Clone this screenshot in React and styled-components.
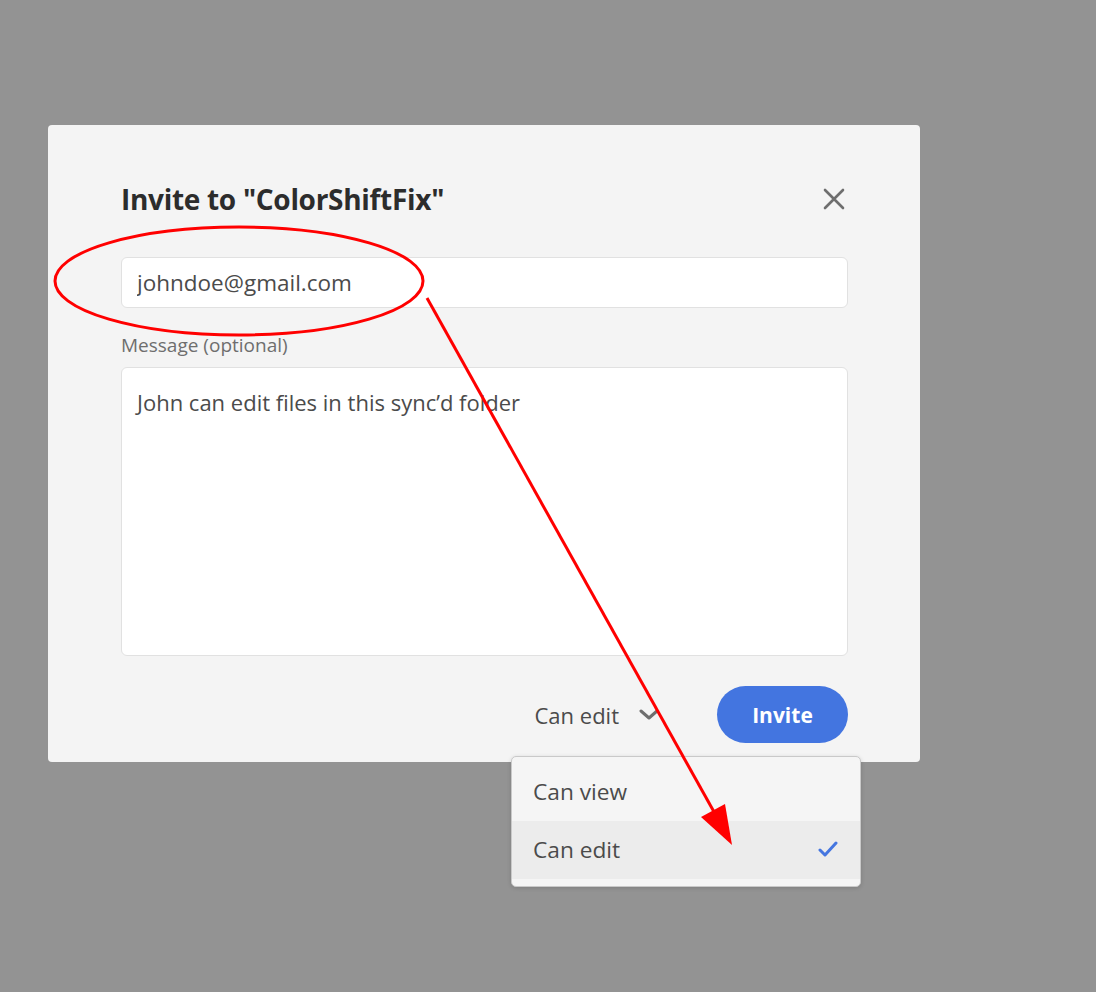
import React, { useState } from "react";
import styled, { createGlobalStyle } from "styled-components";

const GlobalStyle = createGlobalStyle`
  html, body {
    margin: 0;
    padding: 0;
    background: #939393;
  }
  body {
    font-family: "Open Sans", "Noto Sans", sans-serif;
    -webkit-font-smoothing: antialiased;
  }
`;

const InviteDialog = () => {
  const [email, setEmail] = useState("johndoe@gmail.com");
  const [message, setMessage] = useState("John can edit files in this sync\u2019d folder");
  const [role, setRole] = useState("edit");

  return (
    <Page>
      <GlobalStyle />
      <Dialog>
        <Header>
          <Title>Invite to "ColorShiftFix"</Title>
          <CloseButton aria-label="Close">
            <svg width="22" height="22" viewBox="0 0 22 22">
              <path d="M2 2 L20 20 M20 2 L2 20" stroke="#6e6e6e" strokeWidth="2.6" strokeLinecap="round" />
            </svg>
          </CloseButton>
        </Header>

        <EmailInput value={email} onChange={(e) => setEmail(e.target.value)} />

        <Label>Message (optional)</Label>
        <MessageBox value={message} onChange={(e) => setMessage(e.target.value)} />

        <Footer>
          <Picker>
            <PickerText>{role === "edit" ? "Can edit" : "Can view"}</PickerText>
            <svg width="20" height="12" viewBox="0 0 20 12">
              <path d="M2 2 L10 9 L18 2" fill="none" stroke="#6e6e6e" strokeWidth="3" strokeLinecap="round" strokeLinejoin="round" />
            </svg>
            <Menu>
              <MenuItem onClick={() => setRole("view")} $selected={role === "view"}>
                Can view
                {role === "view" && <Check />}
              </MenuItem>
              <MenuItem onClick={() => setRole("edit")} $selected={role === "edit"}>
                Can edit
                {role === "edit" && <Check />}
              </MenuItem>
            </Menu>
          </Picker>
          <InviteButton>Invite</InviteButton>
        </Footer>
      </Dialog>

      {/* red annotation drawn on top of the screenshot */}
      <Annotation width="1096" height="992" viewBox="0 0 1096 992">
        <ellipse cx="239" cy="281" rx="184" ry="54" fill="none" stroke="#ff0000" strokeWidth="3" />
        <line x1="427" y1="298" x2="718" y2="819" stroke="#ff0000" strokeWidth="3" />
        <polygon points="732,845 701,817 725,804" fill="#ff0000" />
      </Annotation>
    </Page>
  );
};

const Check = () => (
  <svg width="22" height="18" viewBox="0 0 22 18">
    <path d="M3 9 L8 14 L19 2" fill="none" stroke="#4576e0" strokeWidth="3" strokeLinecap="round" strokeLinejoin="round" />
  </svg>
);

// --- STYLES ---

const Page = styled.div`
  position: relative;
  width: 1096px;
  height: 992px;
  padding: 125px 0 0 48px;
  box-sizing: border-box;
`;

const Dialog = styled.div`
  width: 872px;
  height: 637px;
  box-sizing: border-box;
  background: #f4f4f4;
  border-radius: 4px;
  padding: 56px 72px 0 73px;
  display: flex;
  flex-direction: column;
`;

const Header = styled.div`
  display: flex;
  align-items: center;
  justify-content: space-between;
  height: 36px;
  margin-bottom: 40px;
`;

const Title = styled.h2`
  margin: 0;
  font-size: 28px;
  font-weight: 700;
  color: #2c2c2c;
  letter-spacing: -0.3px;
`;

const CloseButton = styled.button`
  border: none;
  background: none;
  padding: 0;
  margin-right: 3px;
  display: flex;
  cursor: pointer;
`;

const fieldBase = `
  width: 100%;
  box-sizing: border-box;
  background: #fff;
  border: 1px solid #e1e1e1;
  border-radius: 6px;
  font-family: "Open Sans", "Noto Sans", sans-serif;
  font-size: 22px;
  color: #4b4b4b;
  outline: none;
`;

const EmailInput = styled.input`
  ${fieldBase}
  height: 51px;
  padding: 0 15px;
  font-size: 22.5px;
`;

const Label = styled.label`
  margin-top: 24px;
  height: 35px;
  font-size: 19px;
  color: #6e6e6e;
`;

const MessageBox = styled.textarea`
  ${fieldBase}
  height: 289px;
  padding: 19px 15px;
  resize: none;
  line-height: 30px;
`;

const Footer = styled.div`
  display: flex;
  align-items: center;
  justify-content: flex-end;
  margin-top: 30px;
`;

const Picker = styled.div`
  position: relative;
  display: flex;
  align-items: center;
  gap: 20px;
  margin-right: 58px;
  cursor: pointer;
`;

const PickerText = styled.span`
  font-size: 22px;
  color: #4b4b4b;
`;

const InviteButton = styled.button`
  width: 131px;
  height: 57px;
  border: none;
  border-radius: 29px;
  background: #4375e0;
  color: #fff;
  font-family: "Open Sans", "Noto Sans", sans-serif;
  font-size: 21px;
  font-weight: 700;
  cursor: pointer;
`;

const Menu = styled.div`
  position: absolute;
  top: 56px;
  right: -202px;
  width: 350px;
  box-sizing: border-box;
  padding: 6px 0 7px;
  background: #f5f5f5;
  border: 1px solid #c9c9c9;
  border-radius: 5px;
  box-shadow: 0 1px 4px rgba(0, 0, 0, 0.15);
`;

const MenuItem = styled.div`
  height: 58px;
  display: flex;
  align-items: center;
  justify-content: space-between;
  padding: 0 21px 0 21px;
  font-size: 22.7px;
  color: #4b4b4b;
  background: ${(p) => (p.$selected ? "#ececec" : "transparent")};
`;

const Annotation = styled.svg`
  position: absolute;
  top: 0;
  left: 0;
  pointer-events: none;
`;

export default InviteDialog;
